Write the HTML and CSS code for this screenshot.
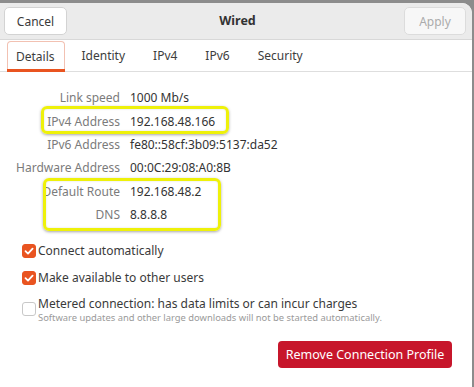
FILE: index.html
```html
<!DOCTYPE html>
<html>
<head>
<meta charset="utf-8">
<link rel="stylesheet" href="styles.css">
</head>
<body>
<div class="window">
  <div class="header">
    <button class="btn">Cancel</button>
    <div class="title">Wired</div>
    <button class="btn disabled">Apply</button>
  </div>
  <div class="tabs">
    <div class="tab active">Details</div>
    <div class="tab">Identity</div>
    <div class="tab">IPv4</div>
    <div class="tab">IPv6</div>
    <div class="tab">Security</div>
  </div>
  <div class="content">
    <div class="details">
      <div class="label">Link speed</div><div class="value">1000 Mb/s</div>
      <div class="label">IPv4 Address</div><div class="value">192.168.48.166</div>
      <div class="label">IPv6 Address</div><div class="value">fe80::58cf:3b09:5137:da52</div>
      <div class="label">Hardware Address</div><div class="value">00:0C:29:08:A0:8B</div>
      <div class="label">Default Route</div><div class="value">192.168.48.2</div>
      <div class="label">DNS</div><div class="value">8.8.8.8</div>
    </div>
    <div class="hl hl1"></div>
    <div class="hl hl2"></div>
    <div class="checks">
      <div class="check"><span class="box on"><svg viewBox="0 0 14 14" width="14" height="14"><path d="M3.5 7.2 L6 9.6 L10.6 4.6" fill="none" stroke="#fff" stroke-width="1.8" stroke-linecap="round" stroke-linejoin="round"/></svg></span><span class="ctext">Connect automatically</span></div>
      <div class="check"><span class="box on"><svg viewBox="0 0 14 14" width="14" height="14"><path d="M3.5 7.2 L6 9.6 L10.6 4.6" fill="none" stroke="#fff" stroke-width="1.8" stroke-linecap="round" stroke-linejoin="round"/></svg></span><span class="ctext">Make available to other users</span></div>
      <div class="check metered"><span class="box"></span><div><div class="ctext">Metered connection: has data limits or can incur charges</div><div class="sub">Software updates and other large downloads will not be started automatically.</div></div></div>
    </div>
    <div class="actions"><button class="remove">Remove Connection Profile</button></div>
  </div>
</div>
</body>
</html>
```
FILE: styles.css
```css
* { box-sizing: border-box; }
html, body { margin: 0; padding: 0; }
body {
  background: #8c8c8c;
  width: 474px;
  height: 387px;
  overflow: hidden;
  font-family: "Noto Sans", "Open Sans", sans-serif;
  color: #3d3d3d;
}
.window {
  margin-top: 3px;
  width: 472px;
  height: 384px;
  background: #ffffff;
  border-top-right-radius: 10px;
  overflow: hidden;
  position: relative;
}
.header {
  height: 37px;
  background: #ebebeb;
  border-bottom: 1px solid #d8d8d8;
  display: flex;
  align-items: center;
  justify-content: space-between;
  padding: 0 6px 1px 4px;
}
.btn {
  font-family: inherit;
  font-size: 12px;
  height: 28px;
  padding: 0;
  width: 63px;
  background: #ffffff;
  border: 1px solid #d3d3d3;
  border-radius: 5px;
  color: #3a3a3a;
  margin-top: 1px;
}
.btn.disabled { color: #ababab; background: #f7f7f7; border-color: #dcdcdc; width: 62px; }
.title { font-weight: bold; font-size: 12.5px; color: #333; margin-left: 4px; }
.tabs {
  height: 32px;
  border-bottom: 1px solid #dedede;
  display: flex;
  align-items: stretch;
  padding-left: 7px;
  padding-top: 1px;
}
.tab {
  font-size: 12px;
  color: #3d3d3d;
  display: flex;
  align-items: center;
  padding: 0 14px 2px;
  position: relative;
}
.tab.active {
  border: 1px solid #f2c1b2;
  border-bottom: none;
  border-radius: 4px 4px 0 0;
  padding: 0 9px 1px 8px;
  margin-right: 3px;
}
.tab.active::after {
  content: "";
  position: absolute;
  left: -1px; right: -1px; bottom: -1px;
  height: 3px;
  background: #e95420;
}
.content { padding-top: 14px; position: relative; height: 314px; }
.details {
  display: grid;
  grid-template-columns: 120px auto;
  column-gap: 10px;
  grid-auto-rows: 23.4px;
  align-items: center;
  font-size: 12px;
}
.label { text-align: right; color: #7b7b7b; }
.value { color: #333; }
.hl {
  position: absolute;
  border: 3px solid #eef10a;
  border-radius: 6px;
  box-shadow: 0 1px 3px rgba(0,0,0,0.35), inset 0 0 2px rgba(0,0,0,0.15);
}
.hl1 { left: 41px; top: 34px; width: 188px; height: 28px; }
.hl2 { left: 43px; top: 106px; width: 178px; height: 53px; }
.checks { margin-top: 17px; padding-left: 22px; display: flex; flex-direction: column; gap: 12px; }
.check { display: flex; align-items: center; font-size: 12px; color: #3a3a3a; height: 15px; }
.check .box {
  width: 14px; height: 14px; border-radius: 3px; flex: none;
  border: 1px solid #c8c8c8; background: #fff; margin-right: 2px;
  display: flex;
}
.check .box.on { background: #e95420; border-color: #e95420; }
.check .box svg { margin: -1px; }
.check.metered { align-items: flex-start; height: auto; margin-top: 0; }
.check.metered .box { margin-top: 5px; }
.check.metered .ctext { line-height: 14px; }
.sub { font-size: 9.4px; color: #9a9a9a; line-height: 12px; margin-top: 1px; }
.actions { display: flex; justify-content: flex-end; padding-right: 20px; margin-top: 17px; }
.remove {
  font-family: inherit;
  font-size: 12.5px;
  color: #fff;
  background: #c7162b;
  border: none;
  border-radius: 4px;
  width: 174px;
  height: 27px;
  padding: 0;
}
```
